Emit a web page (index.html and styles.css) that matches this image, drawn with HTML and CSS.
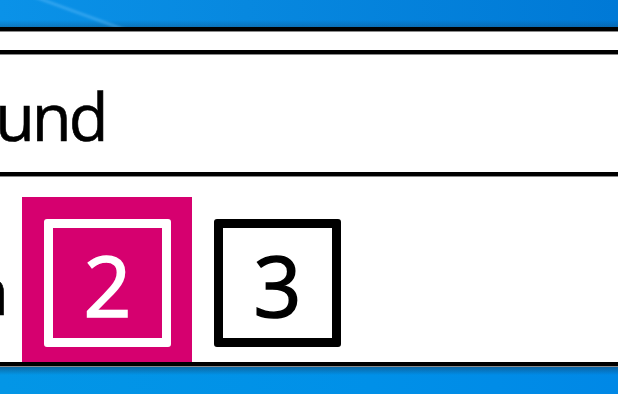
FILE: index.html
```html
<!DOCTYPE html>
<html lang="de">
<head>
<meta charset="utf-8">
<title>Anzeige</title>
<link rel="stylesheet" href="styles.css">
</head>
<body>
<div class="screen">
  <div class="desk desk-top"><div class="streak"></div></div>
  <div class="rule"></div>
  <div class="strip"></div>
  <div class="rule"></div>
  <div class="row-text"><span class="label">und</span></div>
  <div class="rule"></div>
  <div class="row-monitors">
    <span class="label cut">n</span>
    <div class="monitor-slot selected">
      <div class="monitor"><span class="num">2</span></div>
    </div>
    <div class="monitor-slot">
      <div class="monitor"><span class="num">3</span></div>
    </div>
  </div>
  <div class="rule"></div>
  <div class="desk desk-bottom"></div>
</div>
</body>
</html>
```

FILE: styles.css
```css
html, body {
  margin: 0;
  padding: 0;
  background: #fff;
  overflow: hidden;
}
.screen {
  width: 618px;
  height: 394px;
  display: flex;
  flex-direction: column;
  font-family: "Open Sans", "Noto Sans", sans-serif;
  color: #000;
  overflow: hidden;
}
.desk {
  flex: none;
  position: relative;
  overflow: hidden;
}
.desk-top {
  height: 27px;
  background:
    linear-gradient(to bottom, rgba(0,0,0,0) 0px, rgba(0,0,0,0) 20px, rgba(20,70,110,0.35) 27px),
    linear-gradient(to right, #0a92e8 0%, #0788df 40%, #0079d6 100%);
}
.streak {
  position: absolute;
  left: 20px;
  top: -10px;
  width: 120px;
  height: 3px;
  background: rgba(120, 200, 255, 0.35);
  transform: rotate(20deg);
  transform-origin: left top;
  filter: blur(1px);
}
.desk-bottom {
  height: 27px;
  background:
    linear-gradient(to bottom, rgba(20,70,110,0.55) 0px, rgba(20,70,110,0) 8px),
    linear-gradient(to right, #0396e6 0%, #0090e8 60%, #0088e6 100%);
}
.rule {
  flex: none;
  height: 4px;
  background: #000;
  border-bottom: 1px solid #8a8a8a;
}
.strip {
  flex: none;
  height: 18px;
  background: #fff;
}
.row-text {
  flex: none;
  height: 117px;
  box-sizing: border-box;
  padding-top: 29px;
}
.label {
  display: inline-block;
  font-size: 65px;
  line-height: 1;
  letter-spacing: -3px;
  margin-left: -5px;
  -webkit-text-stroke: 0.6px #000;
}
.row-monitors {
  flex: none;
  height: 185px;
  display: flex;
  align-items: flex-start;
}
.label.cut {
  margin-left: -31px;
  margin-top: 81px;
  width: 53px;
  letter-spacing: 0;
  flex: none;
}
.monitor-slot {
  flex: none;
  box-sizing: border-box;
  width: 170px;
  height: 165px;
  margin-top: 20px;
  padding: 22px 21px 15px 22px;
}
.monitor-slot.selected {
  background: #d6006f;
}
.monitor {
  box-sizing: border-box;
  width: 127px;
  height: 128px;
  border: 9px solid #000;
  border-radius: 3px;
  display: flex;
  align-items: center;
  justify-content: center;
}
.selected .monitor {
  border-color: #fff;
}
.num {
  font-size: 84px;
  font-weight: 400;
  line-height: 1;
  color: #000;
  margin-top: 3px;
  -webkit-text-stroke: 1.6px #000;
}
.selected .num {
  color: #fff;
  -webkit-text-stroke-color: #fff;
}
```
